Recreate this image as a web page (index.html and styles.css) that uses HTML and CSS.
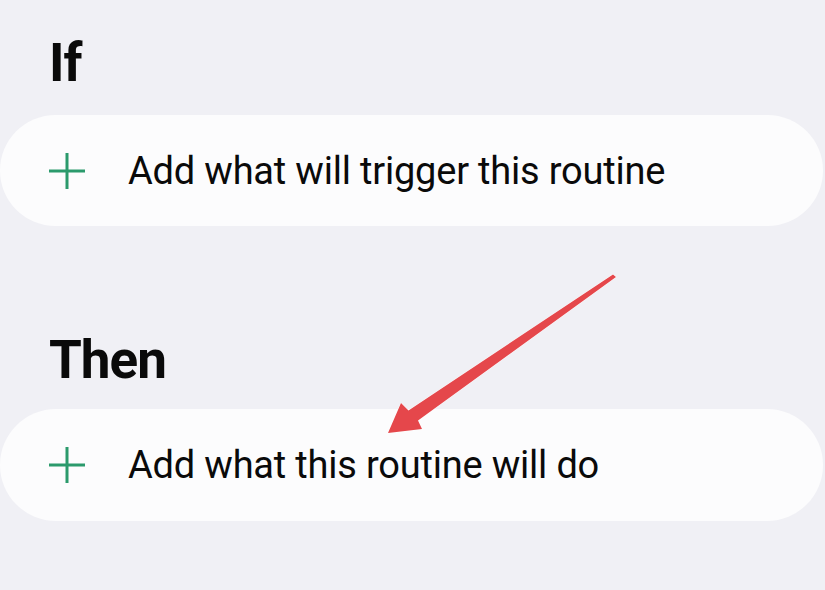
FILE: index.html
```html
<!DOCTYPE html>
<html>
<head>
<meta charset="utf-8">
<link rel="stylesheet" href="styles.css">
</head>
<body>
<main class="screen">
  <h2 class="heading heading-if">If</h2>
  <div class="card card-if">
    <svg class="plus" viewBox="0 0 38 38" width="38" height="38"><path d="M19 1V37M1 19H37" stroke="#2b9a6c" stroke-width="3" fill="none"/></svg>
    <span class="label">Add what will trigger this routine</span>
  </div>
  <h2 class="heading heading-then">Then</h2>
  <div class="card card-then">
    <svg class="plus" viewBox="0 0 38 38" width="38" height="38"><path d="M19 1V37M1 19H37" stroke="#2b9a6c" stroke-width="3" fill="none"/></svg>
    <span class="label">Add what this routine will do</span>
  </div>
  <svg class="arrow" viewBox="0 0 825 590" width="825" height="590">
    <path d="M616 277 L418 420.5 L422 429 L388 433 L401 403 L408.5 410.5 L613 274.5 Z" fill="#e5474b" stroke="#ffffff" stroke-width="1" stroke-linejoin="round" paint-order="stroke"/>
  </svg>
</main>
</body>
</html>
```

FILE: styles.css
```css
html, body {
  margin: 0;
  padding: 0;
  background: #f0f0f5;
}
.screen {
  position: relative;
  width: 825px;
  height: 590px;
  overflow: hidden;
  font-family: Roboto, "Liberation Sans", sans-serif;
  color: #0a0a0a;
}
.heading {
  margin: 0;
  padding-left: 49px;
  font-size: 53px;
  line-height: 64px;
  font-weight: 700;
  letter-spacing: -1px;
}
.heading-if {
  padding-top: 31px;
  margin-bottom: 20px;
}
.heading-then {
  margin-top: 102px;
  margin-bottom: 17px;
}
.card {
  display: flex;
  align-items: center;
  width: 823px;
  height: 111px;
  background: #fcfcfd;
  border-radius: 56px;
  box-sizing: border-box;
  padding-left: 48px;
}
.card-then {
  height: 112px;
}
.plus {
  flex: none;
  margin-right: 42px;
}
.label {
  font-size: 38px;
  letter-spacing: -0.2px;
}
.arrow {
  position: absolute;
  left: 0;
  top: 0;
  pointer-events: none;
}
```
